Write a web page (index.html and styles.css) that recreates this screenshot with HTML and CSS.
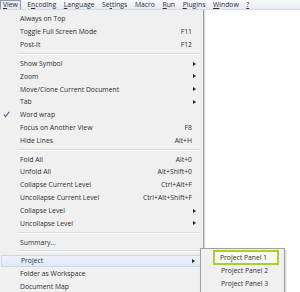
FILE: index.html
```html
<!DOCTYPE html>
<html lang="en">
<head>
  <meta charset="UTF-8" />
  <title>View menu</title>
  <link rel="stylesheet" href="styles.css">
</head>
<body>

  <div class="menubar">
    <span class="menubar-item open"><u>V</u>iew</span>
    <span class="menubar-item">E<u>n</u>coding</span>
    <span class="menubar-item"><u>L</u>anguage</span>
    <span class="menubar-item">Se<u>t</u>tings</span>
    <span class="menubar-item">Macro</span>
    <span class="menubar-item"><u>R</u>un</span>
    <span class="menubar-item"><u>P</u>lugins</span>
    <span class="menubar-item"><u>W</u>indow</span>
    <span class="menubar-item"><u>?</u></span>
  </div>

  <div class="editor">
    <ul class="menu view-menu">
      <li class="item"><span class="label">Always on Top</span></li>
      <li class="item"><span class="label">Toggle Full Screen Mode</span><span class="key">F11</span></li>
      <li class="item"><span class="label">Post-It</span><span class="key">F12</span></li>
      <li class="sep"></li>
      <li class="item sub"><span class="label">Show Symbol</span></li>
      <li class="item sub"><span class="label">Zoom</span></li>
      <li class="item sub"><span class="label">Move/Clone Current Document</span></li>
      <li class="item sub"><span class="label">Tab</span></li>
      <li class="item checked">
        <svg class="check" width="7" height="7" viewBox="0 0 7 7"><path d="M0.8 3.6 L2.6 5.6 L6.2 0.8" fill="none" stroke="#4a5f80" stroke-width="1.1"/></svg>
        <span class="label">Word wrap</span>
      </li>
      <li class="item"><span class="label">Focus on Another View</span><span class="key">F8</span></li>
      <li class="item"><span class="label">Hide Lines</span><span class="key">Alt+H</span></li>
      <li class="sep"></li>
      <li class="item"><span class="label">Fold All</span><span class="key">Alt+0</span></li>
      <li class="item"><span class="label">Unfold All</span><span class="key">Alt+Shift+0</span></li>
      <li class="item"><span class="label">Collapse Current Level</span><span class="key">Ctrl+Alt+F</span></li>
      <li class="item"><span class="label">Uncollapse Current Level</span><span class="key">Ctrl+Alt+Shift+F</span></li>
      <li class="item sub"><span class="label">Collapse Level</span></li>
      <li class="item sub"><span class="label">Uncollapse Level</span></li>
      <li class="sep"></li>
      <li class="item"><span class="label">Summary...</span></li>
      <li class="sep"></li>
      <li class="item sub active">
        <span class="label">Project</span>
        <ul class="menu submenu">
          <li class="item marked"><span class="label">Project Panel 1</span></li>
          <li class="item"><span class="label">Project Panel 2</span></li>
          <li class="item"><span class="label">Project Panel 3</span></li>
        </ul>
      </li>
      <li class="item"><span class="label">Folder as Workspace</span></li>
      <li class="item"><span class="label">Document Map</span></li>
    </ul>
  </div>

</body>
</html>
```

FILE: styles.css
```css
body {
  margin: 0;
  font-family: "Open Sans", "Noto Sans", sans-serif;
  font-size: 6.8px;
  color: #2e2e2e;
  background-color: #ffffff;
  width: 300px;
  height: 292px;
  overflow: hidden;
}

u {
  text-decoration: underline;
  text-underline-offset: 1px;
}

/* top menu bar */
.menubar {
  display: flex;
  height: 9px;
  line-height: 9px;
  background: linear-gradient(#f7f9fc, #e6ebf3);
  border-bottom: 1px solid #d6dbe4;
}

.menubar-item {
  padding: 0 3.8px;
  white-space: nowrap;
}

.menubar-item.open {
  padding: 0 2px;
  background-color: #e8ecf2;
  border: 1px solid #8e9aa9;
  border-bottom: none;
  height: 8px;
  line-height: 8px;
  margin-right: 2.5px;
}

.editor {
  position: relative;
  height: 282px;
  overflow: hidden;
}

/* drop down menus */
.menu {
  list-style: none;
  margin: 0;
  padding: 2.6px 0;
  background-color: #f0f0f0;
  box-sizing: border-box;
}

.view-menu {
  position: absolute;
  left: 0;
  top: 0;
  width: 204px;
  height: 100%;
  border-right: 1px solid #a0a0a0;
  box-shadow: 1px 0 1px rgba(0, 0, 0, 0.15);
}

.item {
  position: relative;
  display: flex;
  align-items: center;
  height: 12.8px;
  padding: 0 11px 0 20px;
  white-space: nowrap;
}

.label {
  flex: 1;
}

.key {
  text-align: right;
}

.sub::after {
  content: "";
  position: absolute;
  right: 7px;
  top: 4.6px;
  border-left: 3px solid #222;
  border-top: 2px solid transparent;
  border-bottom: 2px solid transparent;
}

.check {
  position: absolute;
  left: 3px;
  top: 3px;
}

.sep {
  height: 1px;
  margin: 2px 3px 2.1px 18px;
  background-color: #dcdcdc;
  border-bottom: 1px solid #ffffff;
}

.item.active {
  background: linear-gradient(#eef3fb, #dde8f7);
  box-shadow: inset 0 0 0 1px #cbd8ea;
  margin: 0 1px;
}

/* project submenu */
.submenu {
  position: absolute;
  left: 199px;
  top: -7px;
  width: 85px;
  height: auto;
  border: 1px solid #a0a0a0;
  box-shadow: 1px 1px 2px rgba(0, 0, 0, 0.2);
}

.submenu .item {
  padding-left: 20px;
}

.item.marked {
  margin: 0 6px 0 13px;
  padding-left: 6px;
  background-color: #f7f9f2;
  outline: 2px solid #a6d12c;
  outline-offset: -1px;
}
```
